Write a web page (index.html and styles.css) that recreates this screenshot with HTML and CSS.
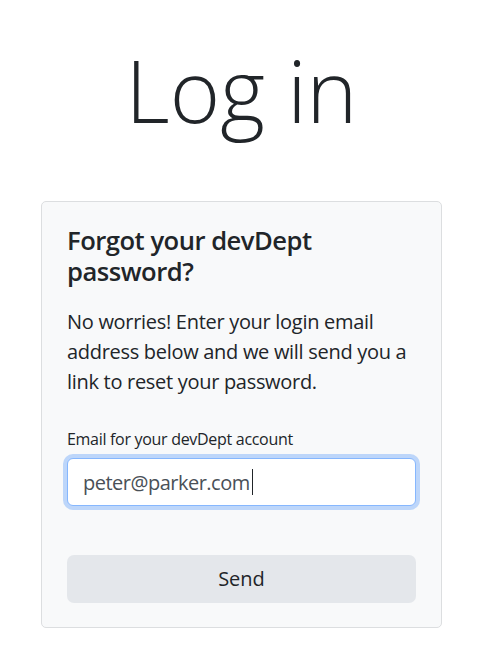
FILE: index.html
```html
<!DOCTYPE html>
<html lang="en">
<head>
<meta charset="utf-8">
<title>Log in</title>
<link rel="stylesheet" href="styles.css">
</head>
<body>
<main class="page">
  <h1 class="title">Log in</h1>
  <section class="card">
    <h2 class="card-title">Forgot your devDept password?</h2>
    <p class="lead">No worries! Enter your login email address below and we will send you a link to reset your password.</p>
    <form class="form">
      <label class="label" for="email">Email for your devDept account</label>
      <div class="input focused" id="email"><span class="value">peter@parker.com</span><span class="caret"></span></div>
      <button type="button" class="btn">Send</button>
    </form>
  </section>
</main>
</body>
</html>
```
FILE: styles.css
```css
* { box-sizing: border-box; }
html, body { margin: 0; padding: 0; background: #fff; }
body {
  font-family: "Open Sans", "Noto Sans", sans-serif;
  color: #212529;
  width: 492px;
  height: 664px;
  overflow: hidden;
}
.page {
  padding: 0 50px 0 41px;
  display: flex;
  flex-direction: column;
}
.title {
  margin: 0;
  font-weight: 300;
  font-size: 86px;
  line-height: 1;
  text-align: center;
  padding-top: 47px;
  height: 201px;
}
.card {
  background: #f8f9fa;
  border: 1px solid #dcdee0;
  border-radius: 5px;
  padding: 24px 25px 24px 25px;
}
.card-title {
  margin: 0 0 20px;
  font-size: 25.6px;
  font-weight: 600;
  line-height: 30.7px;
  letter-spacing: -0.5px;
}
.lead {
  margin: 0 0 30px;
  font-size: 20px;
  line-height: 30px;
  letter-spacing: -0.3px;
}
.form { display: flex; flex-direction: column; }
.label {
  font-size: 16px;
  line-height: 24px;
  margin-bottom: 7px;
  letter-spacing: -0.3px;
}
.input {
  height: 48px;
  border: 1px solid #86b7fe;
  border-radius: 6px;
  background: #fff;
  padding: 0 15px;
  display: flex;
  align-items: center;
  font-size: 20px;
  color: #495057;
  letter-spacing: -0.5px;
}
.input.focused { box-shadow: 0 0 0 4px rgba(13, 110, 253, 0.25); }
.caret {
  width: 1px;
  height: 26px;
  background: #212529;
  margin-left: 2px;
}
.btn {
  margin-top: 49px;
  height: 48px;
  border: 0;
  border-radius: 7px;
  background: #e4e7eb;
  color: #212529;
  font-family: inherit;
  font-size: 20px;
  line-height: 30px;
}
```
